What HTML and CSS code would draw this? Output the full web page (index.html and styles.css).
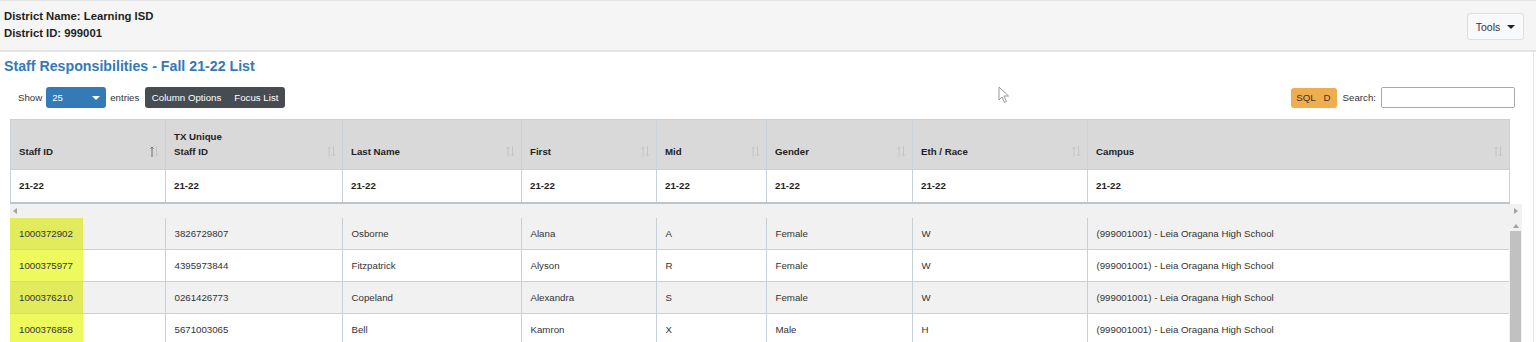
FILE: index.html
```
<!DOCTYPE html>
<html lang="en">
<head>
  <meta charset="UTF-8" />
  <meta name="viewport" content="width=device-width, initial-scale=1.0" />
  <title>Staff Responsibilities - Fall 21-22 List</title>
  <link rel="stylesheet" href="styles.css">
</head>
<body>
  <header class="district-bar">
    <div class="district-info">
      <div>District Name: Learning ISD</div>
      <div>District ID: 999001</div>
    </div>
    <button class="tools-btn">Tools <span class="caret"></span></button>
  </header>

  <main class="page">
    <h2 class="list-title">Staff Responsibilities - Fall 21-22 List</h2>

    <div class="controls">
      <div class="length">
        <span>Show</span>
        <span class="length-select">25 <span class="caret caret-white"></span></span>
        <span>entries</span>
        <div class="btn-group">
          <button>Column Options</button>
          <button>Focus List</button>
        </div>
      </div>
      <div class="search">
        <span class="sql-btn"><span>SQL</span><span>D</span></span>
        <label>Search:</label>
        <input type="text">
      </div>
    </div>

    <div class="table-wrap">
      <table class="head-table">
        <colgroup>
          <col style="width:155px"><col style="width:177px"><col style="width:179px"><col style="width:135px">
          <col style="width:110px"><col style="width:146px"><col style="width:175px"><col style="width:422px">
        </colgroup>
        <thead>
          <tr class="title-row">
            <th><div class="th-inner"><span>Staff ID</span>
              <svg class="sort sorted" width="9" height="11" viewBox="0 0 9 11"><path class="up" d="M2 11 V1 M0.5 2.5 L2 1 L3.5 2.5"/><path class="down" d="M6.5 0 V10 M5 8.5 L6.5 10 L8 8.5"/></svg>
            </div></th>
            <th><div class="th-inner"><span>TX Unique<br>Staff ID</span>
              <svg class="sort" width="9" height="11" viewBox="0 0 9 11"><path class="up" d="M2 11 V1 M0.5 2.5 L2 1 L3.5 2.5"/><path class="down" d="M6.5 0 V10 M5 8.5 L6.5 10 L8 8.5"/></svg>
            </div></th>
            <th><div class="th-inner"><span>Last Name</span>
              <svg class="sort" width="9" height="11" viewBox="0 0 9 11"><path class="up" d="M2 11 V1 M0.5 2.5 L2 1 L3.5 2.5"/><path class="down" d="M6.5 0 V10 M5 8.5 L6.5 10 L8 8.5"/></svg>
            </div></th>
            <th><div class="th-inner"><span>First</span>
              <svg class="sort" width="9" height="11" viewBox="0 0 9 11"><path class="up" d="M2 11 V1 M0.5 2.5 L2 1 L3.5 2.5"/><path class="down" d="M6.5 0 V10 M5 8.5 L6.5 10 L8 8.5"/></svg>
            </div></th>
            <th><div class="th-inner"><span>Mid</span>
              <svg class="sort" width="9" height="11" viewBox="0 0 9 11"><path class="up" d="M2 11 V1 M0.5 2.5 L2 1 L3.5 2.5"/><path class="down" d="M6.5 0 V10 M5 8.5 L6.5 10 L8 8.5"/></svg>
            </div></th>
            <th><div class="th-inner"><span>Gender</span>
              <svg class="sort" width="9" height="11" viewBox="0 0 9 11"><path class="up" d="M2 11 V1 M0.5 2.5 L2 1 L3.5 2.5"/><path class="down" d="M6.5 0 V10 M5 8.5 L6.5 10 L8 8.5"/></svg>
            </div></th>
            <th><div class="th-inner"><span>Eth / Race</span>
              <svg class="sort" width="9" height="11" viewBox="0 0 9 11"><path class="up" d="M2 11 V1 M0.5 2.5 L2 1 L3.5 2.5"/><path class="down" d="M6.5 0 V10 M5 8.5 L6.5 10 L8 8.5"/></svg>
            </div></th>
            <th><div class="th-inner"><span>Campus</span>
              <svg class="sort" width="9" height="11" viewBox="0 0 9 11"><path class="up" d="M2 11 V1 M0.5 2.5 L2 1 L3.5 2.5"/><path class="down" d="M6.5 0 V10 M5 8.5 L6.5 10 L8 8.5"/></svg>
            </div></th>
          </tr>
          <tr class="filter-row">
            <td>21-22</td><td>21-22</td><td>21-22</td><td>21-22</td>
            <td>21-22</td><td>21-22</td><td>21-22</td><td>21-22</td>
          </tr>
        </thead>
      </table>

      <div class="hscroll">
        <svg width="4" height="6" viewBox="0 0 4 6"><path d="M4 0 L0 3 L4 6 Z" fill="#a3a3a3"/></svg>
        <svg width="4" height="6" viewBox="0 0 4 6"><path d="M0 0 L4 3 L0 6 Z" fill="#a3a3a3"/></svg>
      </div>

      <div class="body-scroll">
        <div class="body-main">
          <table class="body-table">
            <colgroup>
              <col style="width:155px"><col style="width:177px"><col style="width:179px"><col style="width:135px">
              <col style="width:110px"><col style="width:146px"><col style="width:175px"><col style="width:422px">
            </colgroup>
            <tbody>
              <tr>
                <td class="id-cell"><span class="hl">1000372902</span></td>
                <td>3826729807</td><td>Osborne</td><td>Alana</td><td>A</td><td>Female</td><td>W</td>
                <td>(999001001) - Leia Oragana High School</td>
              </tr>
              <tr>
                <td class="id-cell"><span class="hl">1000375977</span></td>
                <td>4395973844</td><td>Fitzpatrick</td><td>Alyson</td><td>R</td><td>Female</td><td>W</td>
                <td>(999001001) - Leia Oragana High School</td>
              </tr>
              <tr>
                <td class="id-cell"><span class="hl">1000376210</span></td>
                <td>0261426773</td><td>Copeland</td><td>Alexandra</td><td>S</td><td>Female</td><td>W</td>
                <td>(999001001) - Leia Oragana High School</td>
              </tr>
              <tr>
                <td class="id-cell"><span class="hl">1000376858</span></td>
                <td>5671003065</td><td>Bell</td><td>Kamron</td><td>X</td><td>Male</td><td>H</td>
                <td>(999001001) - Leia Oragana High School</td>
              </tr>
            </tbody>
          </table>
        </div>
        <div class="vscroll">
          <svg class="vscroll-arrow" width="6" height="4" viewBox="0 0 6 4"><path d="M0 4 L3 0 L6 4 Z" fill="#a3a3a3"/></svg>
          <div class="vscroll-thumb"></div>
        </div>
      </div>
    </div>
  </main>

  <svg class="cursor" width="12" height="18" viewBox="0 0 12 18">
    <path d="M1 1 L1 14 L4 11 L6.5 16.5 L8.5 15.5 L6 10 L10.5 10 Z" fill="#fff" stroke="#9a9a9a" stroke-width="1"/>
  </svg>
</body>
</html>
```

FILE: styles.css
```
:root {
  --blue: #337ab7;
  --line: #c8d0d8;
  --stripe: #f1f1f1;
  --font-main: "Liberation Sans", Arial, sans-serif;
}

* {
  margin: 0;
  padding: 0;
  box-sizing: border-box;
}

body {
  font-family: var(--font-main);
  font-size: 9.7px;
  color: #333;
  background: #fff;
  overflow: hidden;
  height: 342px;
}

/* district header */
.district-bar {
  display: flex;
  justify-content: space-between;
  align-items: flex-start;
  height: 52px;
  background: #f5f5f5;
  border-top: 1px solid #e3e3e3;
  border-bottom: 2px solid #e4e4e4;
  padding: 7px 12px 0 4px;
}

.district-info {
  font-size: 11.3px;
  font-weight: bold;
  line-height: 17px;
  color: #1f1f1f;
}

.tools-btn {
  margin-top: 5px;
  height: 27px;
  width: 57px;
  font-family: var(--font-main);
  font-size: 10.5px;
  color: #333;
  background: #f8f9fa;
  border: 1px solid #dedede;
  border-radius: 3px;
}

.caret {
  display: inline-block;
  width: 0;
  height: 0;
  margin-left: 4px;
  vertical-align: 2px;
  border-left: 4px solid transparent;
  border-right: 4px solid transparent;
  border-top: 4px solid #222;
}

.caret-white {
  border-top-color: #fff;
}

/* page */
.page {
  margin-right: 2px;
  border-right: 1px solid #e5e5e5;
  padding: 5px 0 0 4px;
  height: 290px;
}

.list-title {
  font-size: 14.2px;
  line-height: 18px;
  color: var(--blue);
  font-weight: bold;
}

.controls {
  display: flex;
  justify-content: space-between;
  align-items: center;
  margin-top: 12px;
  padding: 0 18px 0 14px;
  height: 21px;
}

.length,
.search {
  display: flex;
  align-items: center;
  height: 21px;
}

.length-select {
  display: flex;
  justify-content: space-between;
  align-items: center;
  width: 60px;
  height: 21px;
  margin: 0 4px;
  padding: 0 6px;
  background: var(--blue);
  color: #fff;
  border-radius: 3px;
}

.btn-group {
  display: flex;
  margin-left: 6px;
  background: #474c52;
  border-radius: 3px;
}

.btn-group button {
  height: 21px;
  padding: 0 6.5px;
  font-family: var(--font-main);
  font-size: 9.7px;
  color: #fff;
  background: transparent;
  border: none;
}

.sql-btn {
  display: flex;
  gap: 8px;
  height: 20px;
  align-items: center;
  padding: 0 6px 0 5px;
  background: #f0ad4e;
  color: #333;
  border-radius: 3px;
  margin-right: 6px;
}

.search label {
  margin-right: 5px;
}

.search input {
  width: 134px;
  height: 21px;
  border: 1px solid #a9a9a9;
  border-radius: 2px;
}

/* table */
.table-wrap {
  margin: 11px 0 0 6px;
  width: 1512px;
}

.head-table,
.body-table {
  width: 1499px;
  table-layout: fixed;
  border-collapse: collapse;
}

.title-row th {
  height: 50px;
  background: #d9d9d9;
  border: 1px solid var(--line);
  padding: 0 6px 10px 8px;
  vertical-align: bottom;
  text-align: left;
  line-height: 15px;
  color: #222;
}

.th-inner {
  display: flex;
  justify-content: space-between;
  align-items: flex-end;
}

.sort {
  margin-bottom: 2px;
  fill: none;
  stroke-width: 1;
}

.sort path {
  stroke: #c4c4c4;
}

.sort.sorted .up {
  stroke: #6a6a6a;
}

.filter-row td {
  height: 33px;
  background: #fff;
  border: 1px solid var(--line);
  border-bottom: 2px solid #bcc5ce;
  padding: 0 8px;
  font-weight: bold;
  color: #222;
}

.hscroll {
  display: flex;
  justify-content: space-between;
  align-items: center;
  height: 14px;
  background: var(--stripe);
  padding: 0 4px 0 3px;
}

.body-scroll {
  display: flex;
}

.body-main {
  width: 1499px;
}

.body-table td {
  height: 32px;
  padding: 0 9px;
  border-right: 1px solid var(--line);
  border-bottom: 1px solid var(--line);
  color: #333;
  white-space: nowrap;
}

.body-table tr:nth-child(odd) td {
  background: var(--stripe);
}

.body-table td.id-cell {
  padding: 0;
}

.hl {
  display: inline-block;
  line-height: 31px;
  padding: 0 10px 0 9px;
  background: #eef95e;
}

.body-table tr:nth-child(odd) .hl {
  background: #e2eb5b;
}

.vscroll {
  width: 13px;
  background: var(--stripe);
  display: flex;
  flex-direction: column;
  align-items: center;
}

.vscroll-arrow {
  margin-top: 6px;
}

.vscroll-thumb {
  margin-top: 3px;
  width: 11px;
  height: 120px;
  background: #c1c1c1;
}

.cursor {
  position: absolute;
  left: 998px;
  top: 86px;
}
```
